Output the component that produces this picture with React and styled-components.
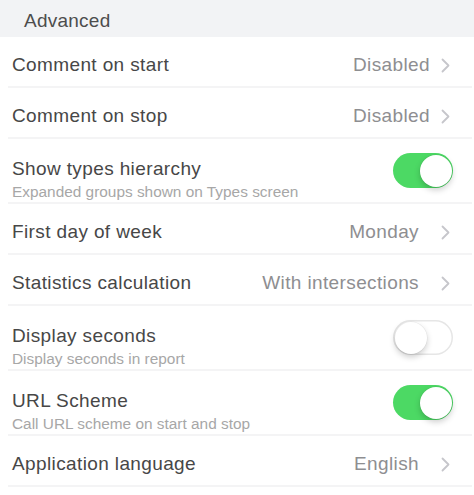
import React from 'react'
import styled, { createGlobalStyle } from 'styled-components'

const GlobalStyle = createGlobalStyle`
  html, body {
    margin: 0;
    padding: 0;
    background: #ffffff;
  }
  body {
    font-family: "Liberation Sans", Arial, sans-serif;
    -webkit-font-smoothing: antialiased;
  }
`

const Page = styled.div`
  width: 474px;
  background: #ffffff;
`

const SectionHeader = styled.div`
  box-sizing: border-box;
  height: 37px;
  padding: 4px 0 0 24px;
  background: #f2f3f5;
  color: #4d4d4d;
  font-size: 19px;
  line-height: 33px;
  letter-spacing: 0.25px;
`

const Row = styled.div`
  box-sizing: border-box;
  display: flex;
  align-items: center;
  height: ${p => (p.$tall ? 65 : 51)}px;
  margin: 0 2px 0 8px;
  padding: 0 19px 0 4px;
  border-bottom: 2px solid #f4f4f5;
`

const Label = styled.div`
  flex: 1;
  min-width: 0;
  padding-top: ${p => (p.$tall ? 18 : 7)}px;
`

const Title = styled.div`
  color: #474747;
  font-size: 19px;
  line-height: 22px;
  letter-spacing: 0.38px;
  white-space: nowrap;
`

const Subtitle = styled.div`
  margin-top: 2px;
  color: #a7a7a7;
  font-size: 15.4px;
  line-height: 20px;
  white-space: nowrap;
`

const Trailing = styled.div`
  display: flex;
  align-items: center;
  height: 22px;
  padding-top: 7px;
`

const Value = styled.span`
  color: #8e8e91;
  font-size: 19px;
  line-height: 22px;
  letter-spacing: 0.38px;
  margin-right: ${p => p.$gap}px;
  white-space: nowrap;
`

const ChevronIcon = styled.svg`
  display: block;
  margin-right: 3px;
`

const Track = styled.div`
  position: relative;
  box-sizing: border-box;
  width: 60px;
  height: 35px;
  border-radius: 18px;
  background: ${p => (p.$on ? '#4cd964' : '#ffffff')};
  box-shadow: ${p => (p.$on ? 'none' : 'inset 0 0 0 1.5px #e6e6e6')};
`

const Knob = styled.div`
  position: absolute;
  top: 1.5px;
  left: ${p => (p.$on ? 26.5 : 1.5)}px;
  width: 32px;
  height: 32px;
  border-radius: 50%;
  background: #ffffff;
  box-shadow: 0 3px 6px rgba(0, 0, 0, 0.2), 0 0 0 0.5px rgba(0, 0, 0, 0.06);
`

const Chevron = () => (
  <ChevronIcon width="9" height="15" viewBox="0 0 9 15">
    <path
      d="M1.5 1.5 L7.5 7.5 L1.5 13.5"
      fill="none"
      stroke="#c6c6cb"
      strokeWidth="1.8"
      strokeLinecap="round"
      strokeLinejoin="round"
    />
  </ChevronIcon>
)

const Toggle = ({ on }) => (
  <Track $on={on}>
    <Knob $on={on} />
  </Track>
)

const rows = [
  { title: 'Comment on start', value: 'Disabled', gap: 11 },
  { title: 'Comment on stop', value: 'Disabled', gap: 11 },
  { title: 'Show types hierarchy', sub: 'Expanded groups shown on Types screen', toggle: true, on: true },
  { title: 'First day of week', value: 'Monday', gap: 22 },
  { title: 'Statistics calculation', value: 'With intersections', gap: 22 },
  { title: 'Display seconds', sub: 'Display seconds in report', toggle: true, on: false },
  { title: 'URL Scheme', sub: 'Call URL scheme on start and stop', toggle: true, on: true },
  { title: 'Application language', value: 'English', gap: 22 },
]

export default function App() {
  return (
    <Page>
      <GlobalStyle />
      <SectionHeader>Advanced</SectionHeader>
      {rows.map(r => (
        <Row key={r.title} $tall={!!r.sub}>
          <Label $tall={!!r.sub}>
            <Title>{r.title}</Title>
            {r.sub && <Subtitle>{r.sub}</Subtitle>}
          </Label>
          {r.toggle ? (
            <Toggle on={r.on} />
          ) : (
            <Trailing>
              <Value $gap={r.gap}>{r.value}</Value>
              <Chevron />
            </Trailing>
          )}
        </Row>
      ))}
    </Page>
  )
}
